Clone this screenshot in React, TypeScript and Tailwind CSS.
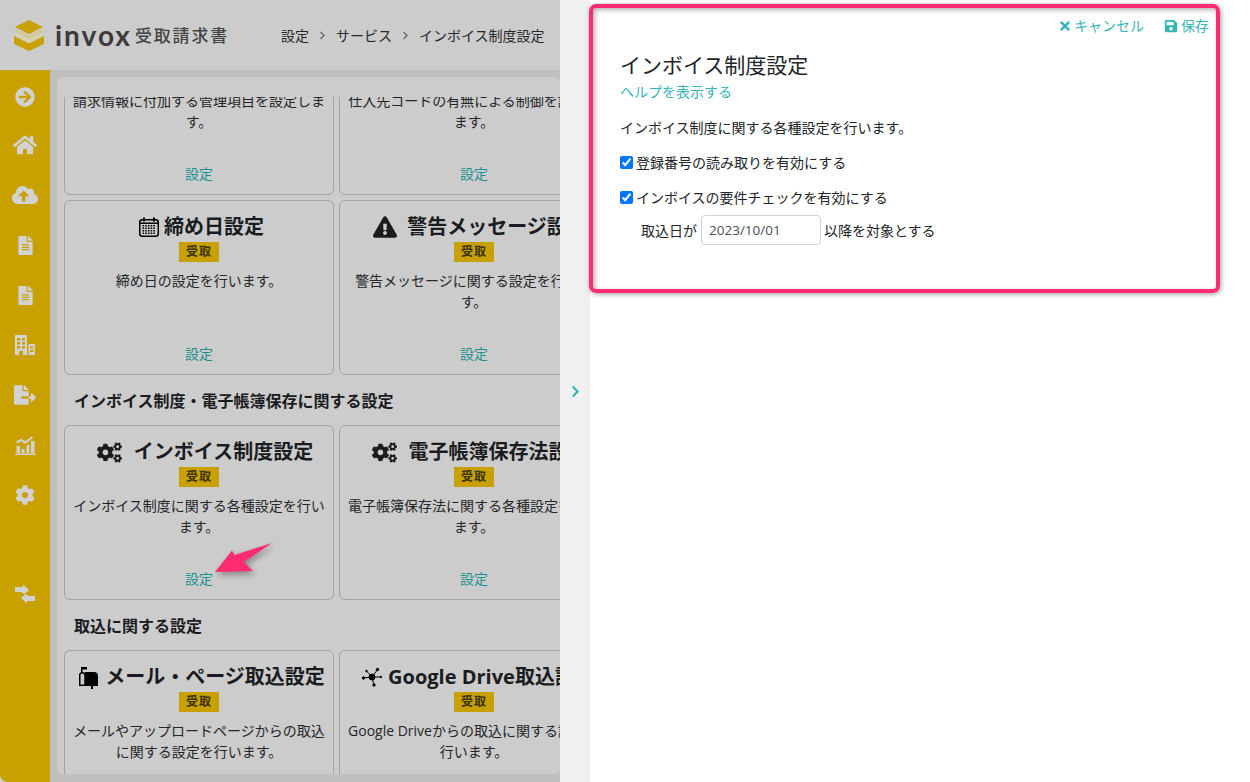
import React from "react";
import {
  FaArrowCircleRight, FaHome, FaCloudUploadAlt, FaFileAlt, FaFileExport, FaCog, FaCogs,
  FaExclamationTriangle, FaTimes, FaSave, FaChevronRight,
} from "react-icons/fa";

const Buildings = () => (
  <svg viewBox="0 0 22 22" className="w-[22px] h-[22px]" fill="currentColor">
    <path fillRule="evenodd" d="M1 1h12v20H9v-4H5v4H1zM3 4v2.500h3V4zm5 0v2.500h3V4zM3 8v2.500h3V8zm5 0v2.500h3V8zM3 12v2.500h3V12zm5 0v2.500h3V12z" />
    <path fillRule="evenodd" d="M14.500 10H21v11h-6.500zM16 12.500v2h3.500v-2zm0 3.500v2h3.500v-2z" />
  </svg>
);

const ChartIcon = () => (
  <svg viewBox="0 0 22 22" className="w-[22px] h-[22px]" fill="currentColor">
    <path d="M1 19.500h20.500V21H1zM2.500 12H6v7H2.500zM7.500 15h3v4h-3zM12.500 11h3v8h-3zM17 7h3.500v12H17z" />
    <path d="M2.500 8.500 7 6l4.500 2.500 7-5.500" fill="none" stroke="currentColor" strokeWidth="2.200" />
  </svg>
);

const SwapIcon = () => (
  <svg viewBox="0 0 22 22" className="w-[22px] h-[22px]" fill="currentColor">
    <path d="M1 3h8V0.500L15 6l-4.500 4L7 8H1z" />
    <path d="M21 17h-8v2.500L7 14l4.500-4L15 12h6z" />
  </svg>
);

const Mailbox = () => (
  <svg viewBox="0 0 21 23" className="w-[21px] h-[23px]" fill="#000">
    <path d="M3 1h6v2.500H4.500V6H3z" />
    <path d="M7 6h9c3 0 4 2 4 4v10H7z" />
    <path d="M1.750 19.250V9c0-1.500 1-2.250 2.500-2.250S7 7.500 7 9v10.250z" fill="none" stroke="#000" strokeWidth="1.500" />
    <path d="M13 20h2v3h-2z" />
  </svg>
);

const Hub = () => (
  <svg viewBox="0 0 20 20" className="w-[20px] h-[20px]" fill="#000" stroke="#000" strokeWidth="1">
    <circle cx="10" cy="10" r="3" />
    <circle cx="15.500" cy="2.500" r="1.200" />
    <circle cx="1.500" cy="11" r="1.200" />
    <circle cx="19" cy="10" r="0.800" />
    <circle cx="12" cy="18" r="1.200" />
    <circle cx="4.500" cy="4" r="0.800" />
    <path d="M10 10 15.500 2.500M10 10 1.500 11M10 10h9M10 10l2 8M10 10 4.500 4" fill="none" />
  </svg>
);

const CalendarIcon = () => {
  const cells: React.ReactNode[] = [];
  for (let r = 0; r < 4; r++) {
    for (let c = 0; c < 5; c++) {
      cells.push(<rect key={r + "-" + c} x={3.5 + c * 2.7} y={8 + r * 2.5} width="1.600" height="1.500" fill="#000" />);
    }
  }
  return (
    <svg viewBox="0 0 20 20" className="mr-[5px] h-[20px] w-[20px]">
      <rect x="0.750" y="2.750" width="18.500" height="16.500" rx="2.500" fill="none" stroke="#000" strokeWidth="1.500" />
      <path d="M4 0.500h2v4H4zM14 0.500h2v4h-2zM1 5.500h18V7H1z" fill="#000" />
      {cells}
    </svg>
  );
};

const Logo = () => (
  <svg viewBox="0 0 31 31" className="w-[31px] h-[31px]">
    <path d="M15 0 29 7l-14 7L1 7z" fill="#c8a000" />
    <path d="M2 9.500 15 16 28 9.500l1 1.500-14 7-14-7z" fill="#dcc673" />
    <path d="M2 13.500 15 20 28 13.500l1 1.500-14 7-14-7z" fill="#e3d499" />
    <path d="M0 16 15 23.500V31L0 24z" fill="#c8a000" />
    <path d="M30 16 15 23.500V31l15-7z" fill="#c8a000" />
  </svg>
);

type CardProps = {
  icon: React.ReactNode;
  title: string;
  desc: string;
  titleClass: string;
};

const Badge = () => (
  <span className="flex w-[40px] h-[20px] items-center justify-center bg-[#c8a000] text-[12px] font-bold tracking-[1px] text-[#3a3410]">
    受取
  </span>
);

const Card = ({ icon, title, desc, titleClass }: CardProps) => (
  <div className="flex h-[175px] w-[270px] shrink-0 flex-col items-center rounded-[6px] border border-[#a3a3a3] px-[7px] pt-[11px] pb-[8px] text-center">
    <div className={"flex h-[30px] items-center whitespace-nowrap text-[20px] font-bold text-[#1a1c1f] " + titleClass}>
      {icon}
      <span>{title}</span>
    </div>
    <div className="h-[20px]">
      <Badge />
    </div>
    <p className="mt-[8px] text-[14px] leading-[21px] text-[#242628]">{desc}</p>
    <span className="mt-auto text-[14px] leading-[25px] text-[#1e9292]">設定</span>
  </div>
);

const Row = ({ children }: { children: React.ReactNode }) => (
  <div className="flex gap-[5px]">{children}</div>
);

const Heading = ({ children }: { children: React.ReactNode }) => (
  <h2 className="flex h-[50px] items-center pl-[10px] pt-[2px] text-[16px] font-bold text-[#1a1c1f]">{children}</h2>
);

const sideIcons = [
  <FaArrowCircleRight size={20} />,
  <FaHome size={24} />,
  <FaCloudUploadAlt size={26} />,
  <FaFileAlt size={19} />,
  <FaFileAlt size={19} />,
  <Buildings />,
  <FaFileExport size={22} />,
  <ChartIcon />,
  <FaCog size={20} />,
  null,
  <SwapIcon />,
];

const Arrow = () => (
  <svg viewBox="0 0 70 40" className="absolute left-[210px] top-[540px] h-[40px] w-[70px] drop-shadow-[2px_3px_3px_rgba(0,0,0,0.35)]">
    <path d="M5 32 22 10.500l2.500 4.500L62 3 34 22l9 9z" fill="#ff2d6f" />
  </svg>
);

export default function App() {
  return (
    <div
      className="relative flex h-[782px] w-[1250px] overflow-hidden bg-white text-[14px]"
      style={{ fontFamily: '"Open Sans","Noto Sans CJK JP",sans-serif' }}
    >
      <div className="flex h-full w-[560px] shrink-0 flex-col overflow-hidden bg-[#cccccc]">
        <header className="flex h-[70px] shrink-0 items-center pl-[14px]">
          <Logo />
          <span className="ml-[10px] w-[80px] text-[28px] font-bold leading-none tracking-[2px] text-[#3c3a3a]" style={{ fontFamily: '"Lato",sans-serif' }}>
            invox
          </span>
          <span className="pt-[2px] text-[17px] font-medium tracking-[1.800px] text-[#444444]">受取請求書</span>
          <nav className="ml-[52px] flex items-center text-[14px] text-[#26282a]">
            <span>設定</span>
            <FaChevronRight size={9} className="mx-[9px] text-[#6a6a6a]" />
            <span>サービス</span>
            <FaChevronRight size={9} className="mx-[9px] text-[#6a6a6a]" />
            <span>インボイス制度設定</span>
          </nav>
        </header>
        <div className="flex min-h-0 flex-1">
          <aside className="flex w-[50px] shrink-0 flex-col items-center rounded-bl-[8px] bg-[#c8a000] text-[#d2d2d2]">
            {sideIcons.map((icon, i) => (
              <div key={i} className={i === 0 ? "flex h-[50px] w-full shrink-0 items-center justify-center pt-[4px]" : "flex h-[50px] w-full shrink-0 items-center justify-center"}>
                {icon}
              </div>
            ))}
          </aside>
          <main className="min-w-0 flex-1 bg-[#bfbfbf] pt-[7px] pb-[8px] pl-[7px]">
            <div className="h-full overflow-hidden rounded-[6px] bg-[#cccccc] pt-[20px] pl-[7px]">
              <div className="h-full w-[600px] overflow-hidden">
                <div className="-mt-[77px] flex flex-col">
                  <Row>
                    <Card icon={null} title="" titleClass="" desc="請求情報に付加する管理項目を設定します。" />
                    <Card icon={null} title="" titleClass="" desc="仕入先コードの有無による制御を設定します。" />
                  </Row>
                  <div className="h-[5px]" />
                  <Row>
                    <Card icon={<CalendarIcon />} title="締め日設定" titleClass="pl-[5px]" desc="締め日の設定を行います。" />
                    <Card icon={<FaExclamationTriangle size={24} className="mr-[10px]" />} title="警告メッセージ設定" titleClass="pl-[12px]" desc="警告メッセージに関する設定を行います。" />
                  </Row>
                  <Heading>インボイス制度・電子帳簿保存に関する設定</Heading>
                  <Row>
                    <Card icon={<FaCogs size={25} className="mr-[12px]" />} title="インボイス制度設定" titleClass="pl-[12px]" desc="インボイス制度に関する各種設定を行います。" />
                    <Card icon={<FaCogs size={25} className="mr-[12px]" />} title="電子帳簿保存法設定" titleClass="pl-[12px]" desc="電子帳簿保存法に関する各種設定を行います。" />
                  </Row>
                  <Heading>取込に関する設定</Heading>
                  <Row>
                    <Card icon={<span className="mr-[6px]"><Mailbox /></span>} title="メール・ページ取込設定" titleClass="pl-[5px]" desc="メールやアップロードページからの取込に関する設定を行います。" />
                    <Card icon={<span className="mr-[6px]"><Hub /></span>} title="Google Drive取込設定" titleClass="pl-[9px]" desc="Google Driveからの取込に関する設定を行います。" />
                  </Row>
                </div>
              </div>
            </div>
          </main>
        </div>
      </div>

      <div className="flex w-[30px] shrink-0 items-center justify-center bg-[#f0f0f0] text-[#2bb3b3]">
        <FaChevronRight size={13} />
      </div>

      <section className="min-w-0 flex-1 bg-white pl-[30px] pr-[41px] text-[#212529]">
        <div className="flex h-[51px] items-center justify-end gap-[20px] text-[14px] text-[#35b5b5]">
          <span className="flex items-center gap-[2px]"><FaTimes size={14} />キャンセル</span>
          <span className="flex items-center gap-[3px]"><FaSave size={14} />保存</span>
        </div>
        <h1 className="text-[21px] font-normal leading-[28px] text-[#212529]">インボイス制度設定</h1>
        <a className="block text-[14px] leading-[25px] text-[#35b5b5]">ヘルプを表示する</a>
        <p className="mt-[11px] text-[14px] leading-[25px]">インボイス制度に関する各種設定を行います。</p>
        <label className="mt-[10px] flex h-[25px] items-center gap-[3px]">
          <input type="checkbox" defaultChecked className="h-[13px] w-[13px]" />
          登録番号の読み取りを有効にする
        </label>
        <label className="mt-[10px] flex h-[25px] items-center gap-[3px]">
          <input type="checkbox" defaultChecked className="h-[13px] w-[13px]" />
          インボイスの要件チェックを有効にする
        </label>
        <div className="mt-[5px] flex h-[30px] items-center pl-[21px]">
          <span>取込日が</span>
          <input
            readOnly
            value="2023/10/01"
            className="ml-[4px] mr-[3px] h-[30px] w-[120px] rounded-[4px] border border-[#ced4da] px-[7px] text-[13.500px] text-[#495057]"
          />
          <span>以降を対象とする</span>
        </div>
      </section>

      <Arrow />
      <div className="absolute left-[589px] top-[4px] h-[289px] w-[631px] rounded-[7px] border-[4px] border-[#ff2d6f] shadow-[1px_1px_5px_rgba(0,0,0,0.4),inset_2px_2px_5px_rgba(0,0,0,0.3)]" />
    </div>
  );
}
